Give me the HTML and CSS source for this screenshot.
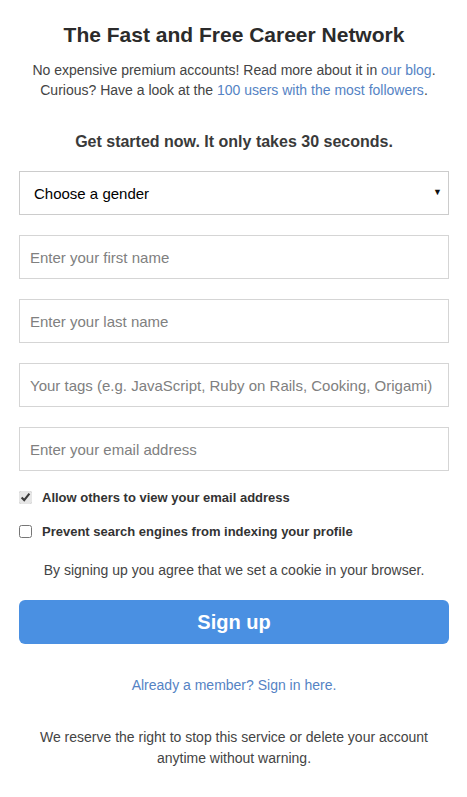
FILE: index.html
```html
<!DOCTYPE html>
<html>
  <head>
    <meta name="viewport" content="width=device-width, initial-scale=1.0" />
    <link rel="stylesheet" href="styles.css">
  </head>
  <body>
    <div class="signup">
      <h1 class="title">The Fast and Free Career Network</h1>
      <p class="intro">
        No expensive premium accounts! Read more about it in <a href="#">our blog</a>.<br />
        Curious? Have a look at the <a href="#">100 users with the most followers</a>.
      </p>
      <h2 class="lead">Get started now. It only takes 30 seconds.</h2>

      <form class="form">
        <div class="select-box">
          <select class="field field-select">
            <option>Choose a gender</option>
            <option>Female</option>
            <option>Male</option>
          </select>
          <span class="select-arrow">&#9660;</span>
        </div>
        <input class="field" type="text" placeholder="Enter your first name" />
        <input class="field" type="text" placeholder="Enter your last name" />
        <input class="field" type="text" placeholder="Your tags (e.g. JavaScript, Ruby on Rails, Cooking, Origami)" />
        <input class="field" type="email" placeholder="Enter your email address" />

        <label class="check"><input type="checkbox" checked /> Allow others to view your email address</label>
        <label class="check"><input type="checkbox" /> Prevent search engines from indexing your profile</label>

        <p class="cookie">By signing up you agree that we set a cookie in your browser.</p>
        <button class="btn" type="button">Sign up</button>
      </form>

      <p class="signin"><a href="#">Already a member? Sign in here.</a></p>
      <p class="footer">We reserve the right to stop this service or delete your account anytime without warning.</p>
    </div>
  </body>
</html>
```

FILE: styles.css
```css
* {
  box-sizing: border-box;
}
body {
  margin: 0;
  padding: 0 18px 0 19px;
  font-family: "Liberation Sans", Arial, sans-serif;
  color: #333;
  background: #fff;
}
a {
  color: #5583c4;
  text-decoration: none;
}
.signup {
  text-align: center;
}
.title {
  margin: 22px 0 0;
  font-size: 21px;
  line-height: 26px;
  font-weight: bold;
  color: #2b2b2b;
}
.intro {
  margin: 12px 0 0;
  font-size: 14px;
  line-height: 20px;
  color: #444;
}
.lead {
  margin: 32px 0 0;
  font-size: 16px;
  line-height: 20px;
  font-weight: bold;
  color: #3a3a3a;
}

/*form fields*/
.form {
  margin-top: 19px;
  display: flex;
  flex-direction: column;
  gap: 20px;
  text-align: left;
}
.field {
  display: block;
  width: 100%;
  height: 44px;
  border: 1px solid #d5d5d5;
  padding: 0 10px;
  font-family: "Liberation Sans", Arial, sans-serif;
  font-size: 15px;
  color: #000;
  background: #fff;
  border-radius: 0;
  outline: none;
}
.field::placeholder {
  color: #808080;
}
.select-box {
  position: relative;
}
.field-select {
  appearance: none;
  -webkit-appearance: none;
  padding-left: 14px;
  border-color: #ccc;
}
.select-arrow {
  position: absolute;
  right: 7px;
  top: 16px;
  font-size: 9px;
  color: #111;
  pointer-events: none;
}

.check {
  display: flex;
  align-items: center;
  gap: 10px;
  font-size: 13px;
  font-weight: bold;
  color: #333;
  margin-top: -1px;
}
.check + .check {
  margin-top: -1px;
}
.check input {
  margin: 0;
  width: 13px;
  height: 13px;
  accent-color: #e6e6e6;
}
.cookie {
  margin: 1px 0 0;
  text-align: center;
  font-size: 14px;
  line-height: 20px;
  color: #444;
}
.btn {
  margin-top: 0;
  height: 44px;
  width: 100%;
  border: none;
  border-radius: 6px;
  background: #4a90e2;
  color: #fff;
  font-family: "Liberation Sans", Arial, sans-serif;
  font-size: 20px;
  font-weight: bold;
}

.signin {
  margin: 31px 0 0;
  font-size: 14px;
  line-height: 20px;
}
.footer {
  margin: 32px auto 0;
  font-size: 14px;
  line-height: 21px;
  color: #444;
  padding: 0 18px;
}
```
